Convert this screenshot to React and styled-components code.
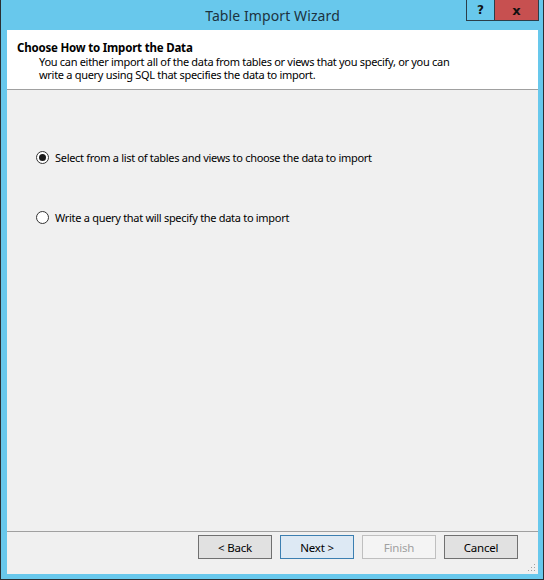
import React from "react";
import styled, { createGlobalStyle } from "styled-components";

const Global = createGlobalStyle`
  html, body { margin: 0; padding: 0; background: #ffffff; }
  body { font-family: "Noto Sans", "Liberation Sans", sans-serif; }
  * { box-sizing: border-box; }
`;

const Window = styled.div`
  width: 544px;
  height: 580px;
  background: #68c8ec;
  border: 1px solid #2a2f33;
  border-top: none;
  padding: 0 5px 5px 6px;
  display: flex;
  flex-direction: column;
`;

const TitleBar = styled.div`
  height: 30px;
  flex: none;
  display: grid;
  grid-template-columns: 1fr auto 1fr;
  align-items: start;
`;

const Title = styled.div`
  grid-column: 2;
  font-size: 14px;
  line-height: 31px;
  color: #1c3340;
  letter-spacing: 0.1px;
`;

const Caption = styled.div`
  grid-column: 3;
  justify-self: end;
  display: flex;
  margin-right: -1px;
`;

const CaptionButton = styled.div`
  width: ${(p) => p.$w}px;
  height: 21px;
  display: flex;
  align-items: center;
  justify-content: center;
  background: ${(p) => (p.$close ? "#c75050" : "transparent")};
  border: 1px solid #2b3e4a;
  border-top: none;
  ${(p) => (p.$close ? "border-left: none;" : "")}
  font-family: "DejaVu Sans", sans-serif;
  font-weight: bold;
  font-size: ${(p) => (p.$close ? 13 : 12)}px;
  color: #111;
`;

const Client = styled.div`
  flex: 1;
  display: flex;
  flex-direction: column;
  background: #f0f0f0;
  font-size: 11px;
  letter-spacing: -0.3px;
  color: #000;
`;

const Header = styled.div`
  height: 60px;
  flex: none;
  background: #ffffff;
  border-bottom: 1px solid #a0a0a0;
  padding: 10px 10px 0 10px;
`;

const Heading = styled.div`
  font-weight: bold;
  font-size: 11.5px;
  letter-spacing: -0.2px;
  line-height: 15px;
`;

const Description = styled.div`
  padding-left: 22px;
  line-height: 13px;
`;

const Body = styled.div`
  flex: 1;
  display: flex;
  flex-direction: column;
  gap: 44px;
  padding: 59px 0 0 29px;
  border-bottom: 1px solid #a0a0a0;
`;

const RadioRow = styled.label`
  display: flex;
  align-items: center;
  gap: 6px;
  height: 16px;
`;

const RadioCircle = styled.span`
  width: 13px;
  height: 13px;
  border-radius: 50%;
  border: 1px solid #333;
  background: #fff;
  display: flex;
  align-items: center;
  justify-content: center;
  &::after {
    content: "";
    width: 7px;
    height: 7px;
    border-radius: 50%;
    background: ${(p) => (p.$checked ? "#1a1a1a" : "transparent")};
  }
`;

const Footer = styled.div`
  height: 42px;
  flex: none;
  display: flex;
  justify-content: flex-end;
  align-items: flex-start;
  gap: 8px;
  padding: 3px 20px 0 0;
  position: relative;
`;

const Button = styled.div`
  width: 74px;
  height: 24px;
  display: flex;
  align-items: center;
  justify-content: center;
  font-size: 11.5px;
  letter-spacing: -0.2px;
  border: 1px solid
    ${(p) => (p.$variant === "default" ? "#3c7fb1" : p.$variant === "disabled" ? "#bfbfbf" : "#707070")};
  background: ${(p) => (p.$variant === "default" ? "#dde9f4" : p.$variant === "disabled" ? "#f4f4f4" : "#e1e1e1")};
  color: ${(p) => (p.$variant === "disabled" ? "#a0a0a0" : "#000")};
`;

const Grip = styled.svg`
  position: absolute;
  right: 2px;
  bottom: 2px;
`;

export default function App() {
  return (
    <>
      <Global />
      <Window>
        <TitleBar>
          <Title>Table Import Wizard</Title>
          <Caption>
            <CaptionButton $w={29}>?</CaptionButton>
            <CaptionButton $w={44} $close>x</CaptionButton>
          </Caption>
        </TitleBar>
        <Client>
          <Header>
            <Heading>Choose How to Import the Data</Heading>
            <Description>
              You can either import all of the data from tables or views that you specify, or you can
              <br />
              write a query using SQL that specifies the data to import.
            </Description>
          </Header>
          <Body>
            <RadioRow>
              <RadioCircle $checked />
              Select from a list of tables and views to choose the data to import
            </RadioRow>
            <RadioRow>
              <RadioCircle />
              Write a query that will specify the data to import
            </RadioRow>
          </Body>
          <Footer>
            <Button>&lt; Back</Button>
            <Button $variant="default">Next &gt;</Button>
            <Button $variant="disabled">Finish</Button>
            <Button>Cancel</Button>
            <Grip width="10" height="10" viewBox="0 0 10 10">
              {[[8, 2], [8, 5], [5, 5], [8, 8], [5, 8], [2, 8]].map(([x, y], i) => (
                <rect key={i} x={x} y={y} width="1" height="1" fill="#a0a0a0" />
              ))}
            </Grip>
          </Footer>
        </Client>
      </Window>
    </>
  );
}
